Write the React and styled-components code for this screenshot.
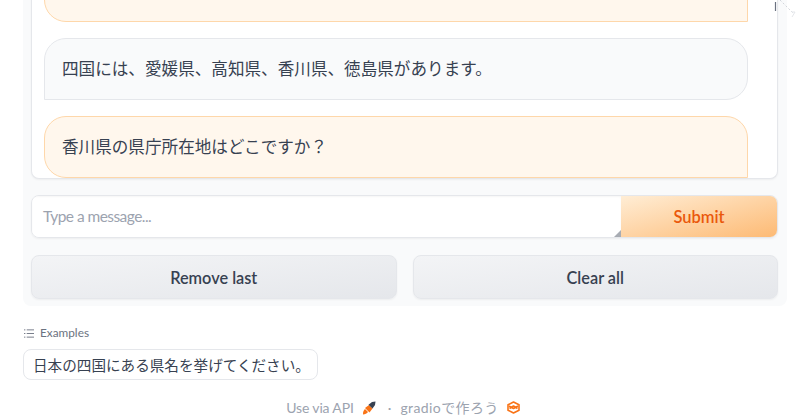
import React from "react";
import styled, { createGlobalStyle } from "styled-components";

const Global = createGlobalStyle`
  html, body { margin: 0; padding: 0; background: #fff; overflow: hidden; }
  * { box-sizing: border-box; }
`;
const SANS = `"Source Sans Pro", "Lato", "Noto Sans CJK JP", sans-serif`;
const CJK = `"Noto Sans CJK JP", sans-serif`;

const Page = styled.div`
  position: relative;
  width: 800px;
  height: 419px;
  overflow: hidden;
  display: flex;
  flex-direction: column;
  justify-content: flex-end;
  padding: 0 13px 0 23px;
  font-family: ${SANS};
`;
const Panel = styled.div`
  flex: none;
  background: #f9fafb;
  border-radius: 8px;
  padding: 0 9px 7px 8px;
  display: flex;
  flex-direction: column;
  gap: 16px;
`;
const Chatbot = styled.div`
  height: 210px;
  overflow: hidden;
  background: #fff;
  border: 1px solid #e5e7eb;
  border-top: 0;
  border-radius: 0 0 8px 8px;
  box-shadow: 0 1px 2px rgba(0,0,0,.05);
  padding: 0 29px 0 12px;
  display: flex;
  flex-direction: column;
  justify-content: flex-end;
  gap: 16px;
`;
const Bubble = styled.div`
  flex: none;
  height: ${p => p.$h}px;
  padding: 17px 17px 0;
  font: 16.6px/24px ${CJK};
  color: #374151;
  border: 1px solid ${p => (p.$user ? "#fed7aa" : "#e5e7eb")};
  background: ${p => (p.$user ? "#fff7ed" : "#f9fafb")};
  border-radius: ${p => (p.$user ? "22px 22px 0 22px" : "22px 22px 22px 0")};
`;
const InputRow = styled.div`
  display: flex;
  height: 43px;
  margin-bottom: 1px;
  border-radius: 8px;
  overflow: hidden;
  border: 1px solid #e5e7eb;
  box-shadow: 0 1px 2px rgba(0,0,0,.05);
`;
const InputWrap = styled.div`
  position: relative;
  flex: 1;
  min-width: 0;
`;
const MessageInput = styled.textarea`
  display: block;
  width: 100%;
  height: 100%;
  resize: none;
  border: 0;
  outline: 0;
  padding: 10px 10px 10px 11px;
  font: 15.5px/20px ${SANS};
  letter-spacing: -0.55px;
  color: #374151;
  background: #fff;
  box-shadow: inset 0 1px 2px rgba(0,0,0,.04);
  &::placeholder { color: #9ca3af; opacity: 1; }
`;
const ResizeGrip = styled.span`
  position: absolute;
  right: 0;
  bottom: 0;
  width: 7px;
  height: 7px;
  background: #a8acb3;
  clip-path: polygon(100% 0, 100% 100%, 0 100%);
`;
const SubmitButton = styled.button`
  flex: none;
  width: 156px;
  border: 0;
  font: 600 16.5px ${SANS};
  color: #ea580c;
  background: linear-gradient(to bottom right, #ffedd5, #fdba74);
`;
const ButtonRow = styled.div`
  display: flex;
  gap: 16px;
`;
const GrayButton = styled.button`
  flex: 1;
  height: 44px;
  border: 1px solid #e5e7eb;
  border-radius: 8px;
  font: 600 16.3px ${SANS};
  color: #374151;
  background: linear-gradient(to bottom right, #f3f4f6, #e5e7eb);
  box-shadow: 0 1px 2px rgba(0,0,0,.05);
`;
const Examples = styled.section`
  flex: none;
  margin-top: 19px;
  display: flex;
  flex-direction: column;
  align-items: flex-start;
  gap: 8px;
`;
const ExamplesLabel = styled.div`
  display: flex;
  align-items: center;
  gap: 6px;
  height: 16px;
  padding-left: 1px;
  font: 11.8px/16px ${SANS};
  color: #6b7280;
`;
const ExampleChip = styled.button`
  height: 31px;
  width: 295px;
  padding: 0 8px 0 9px;
  white-space: nowrap;
  text-align: left;
  background: #fff;
  border: 1px solid #e5e7eb;
  border-radius: 8px;
  font: 14.6px/20px ${CJK};
  color: #374151;
`;
const Footer = styled.footer`
  flex: none;
  margin-top: 19px;
  margin-bottom: 3px;
  margin-right: 4px;
  height: 17px;
  display: flex;
  justify-content: center;
  align-items: center;
  font: 14px/17px ${SANS};
  color: #9ca3af;
`;
const FooterLink = styled.span`
  display: inline-flex;
  align-items: center;
  gap: 8px;
  letter-spacing: ${p => p.$spacing || 0}px;
`;
const Dot = styled.span`
  margin: 0 9px 0 12px;
`;
const Cursor = styled.svg`
  position: absolute;
  top: 0;
  right: 0;
`;

const Rocket = () => (
  <svg width="14" height="14" viewBox="0 0 14 14">
    <path d="M1 13.500c-.2-2.500.7-4.500 2-5.500l3 3c-1 1.500-3 2.500-5 2.500z" fill="#f97316" />
    <path d="M3 7l4-3 3.500 3.500-3 4z" fill="#f97316" />
    <path d="M6.500 3.800 10 1l3.500-.5-.5 3.500-2.500 3.500z" fill="#374151" />
  </svg>
);
const GradioLogo = () => (
  <svg width="13" height="13" viewBox="0 0 13 13" fill="none" stroke="#f97316" strokeWidth="1.600" strokeLinejoin="round">
    <path d="M6.500 1 12 3.800v5.400L6.500 12 1 9.200V3.800z" />
    <path d="M2 5 6.500 7.500 11 5" />
    <path d="M2.500 7.500 6.500 5 10.500 7.500" />
  </svg>
);
const ListIcon = () => (
  <svg width="10" height="9" viewBox="0 0 11 9" stroke="#6b7280" strokeWidth="1">
    <path d="M3 .5h8M3 4.500h8M3 8.500h8" />
    <path d="M0 .5h1.500M0 4.500h1.500M0 8.500h1.500" />
  </svg>
);

export default function App() {
  return (
    <Page>
      <Global />
      <Panel>
        <Chatbot>
          <Bubble $user $h={60} />
          <Bubble $h={62}>四国には、愛媛県、高知県、香川県、徳島県があります。</Bubble>
          <Bubble $user $h={62}>香川県の県庁所在地はどこですか？</Bubble>
        </Chatbot>
        <InputRow>
          <InputWrap>
            <MessageInput placeholder="Type a message..." />
            <ResizeGrip />
          </InputWrap>
          <SubmitButton>Submit</SubmitButton>
        </InputRow>
        <ButtonRow>
          <GrayButton>Remove last</GrayButton>
          <GrayButton>Clear all</GrayButton>
        </ButtonRow>
      </Panel>
      <Examples>
        <ExamplesLabel><ListIcon />Examples</ExamplesLabel>
        <ExampleChip>日本の四国にある県名を挙げてください。</ExampleChip>
      </Examples>
      <Footer>
        <FooterLink $spacing={-0.15}>Use via API <Rocket /></FooterLink>
        <Dot>·</Dot>
        <FooterLink $spacing={0.4}>gradioで作ろう <GradioLogo /></FooterLink>
      </Footer>
      <Cursor width="26" height="20" viewBox="0 0 26 20" fill="none">
        <path d="M1.500 2v9" stroke="#6b7280" strokeWidth="1.200" />
        <path d="M6 0l13 13" stroke="#d1d5db" strokeDasharray="2 2" />
        <path d="M18 12h3l-3 5" stroke="#e5e7eb" />
      </Cursor>
    </Page>
  );
}
